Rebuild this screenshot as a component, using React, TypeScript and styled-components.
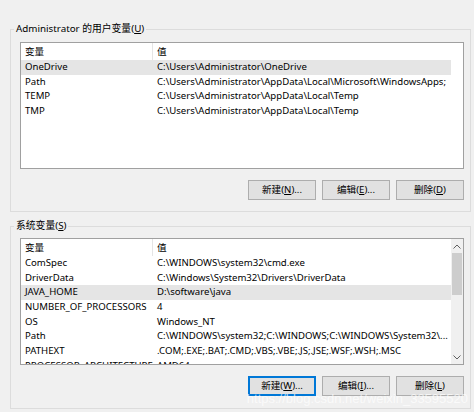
import styled, { createGlobalStyle } from "styled-components";

type EnvVar = { name: string; value: string };

const userVars: EnvVar[] = [
  { name: "OneDrive", value: "C:\\Users\\Administrator\\OneDrive" },
  {
    name: "Path",
    value: "C:\\Users\\Administrator\\AppData\\Local\\Microsoft\\WindowsApps;",
  },
  { name: "TEMP", value: "C:\\Users\\Administrator\\AppData\\Local\\Temp" },
  { name: "TMP", value: "C:\\Users\\Administrator\\AppData\\Local\\Temp" },
];

const systemVars: EnvVar[] = [
  { name: "ComSpec", value: "C:\\WINDOWS\\system32\\cmd.exe" },
  { name: "DriverData", value: "C:\\Windows\\System32\\Drivers\\DriverData" },
  { name: "JAVA_HOME", value: "D:\\software\\java" },
  { name: "NUMBER_OF_PROCESSORS", value: "4" },
  { name: "OS", value: "Windows_NT" },
  {
    name: "Path",
    value: "C:\\WINDOWS\\system32;C:\\WINDOWS;C:\\WINDOWS\\System32\\...",
  },
  { name: "PATHEXT", value: ".COM;.EXE;.BAT;.CMD;.VBS;.VBE;.JS;.JSE;.WSF;.WSH;.MSC" },
  { name: "PROCESSOR_ARCHITECTURE", value: "AMD64" },
];

const GlobalStyle = createGlobalStyle`
  body {
    margin: 0;
    background: #f0f0f0;
    font-family: "Noto Sans", "Noto Sans CJK SC", sans-serif;
    font-size: 9.6px;
    color: #000;
  }
`;

const Window = styled.div`
  position: relative;
  width: 474px;
  height: 412px;
  box-sizing: border-box;
  padding: 21px 3px 0 10px;
  display: flex;
  flex-direction: column;
  gap: 6px;
  overflow: hidden;
`;

const GroupBox = styled.fieldset`
  margin: 0;
  padding: 0;
  width: 461px;
  box-sizing: border-box;
  border: 1px solid #dcdcdc;
  min-width: 0;
`;

const Caption = styled.legend`
  margin-left: 3px;
  padding: 0 2px;
  line-height: 16px;
  font-size: 9.8px;
`;

const GroupBody = styled.div<{ $top: number; $bottom: number }>`
  padding: ${({ $top }) => $top}px 6px ${({ $bottom }) => $bottom}px 9px;
  display: flex;
  flex-direction: column;
  gap: 11px;
`;

const ListBox = styled.div`
  height: 127px;
  box-sizing: border-box;
  border: 1px solid #a0a0a0;
  background: #fff;
  display: flex;
  overflow: hidden;
`;

const ListArea = styled.div`
  width: 430px;
  flex: none;
  overflow: hidden;
`;

const Grid = styled.div`
  display: grid;
  grid-template-columns: 132px 1fr;
  align-items: center;
  white-space: nowrap;
`;

const HeaderRow = styled(Grid)`
  height: 17px;
`;

const HeaderCell = styled.div<{ $divider?: boolean }>`
  height: 17px;
  line-height: 17px;
  padding-left: 4px;
  border-right: ${({ $divider }) => ($divider ? "1px solid #e5e5e5" : "none")};
`;

const Row = styled(Grid)<{ $selected?: boolean }>`
  height: 14.7px;
  line-height: 14.7px;
  background: ${({ $selected }) => ($selected ? "#e5e5e5" : "transparent")};
`;

const Cell = styled.div`
  padding-left: 4px;
  overflow: hidden;
`;

const ScrollBar = styled.div`
  width: 12px;
  background: #f0f0f0;
  display: flex;
  flex-direction: column;
`;

const ScrollArrow = styled.div`
  height: 14px;
  display: flex;
  align-items: center;
  justify-content: center;
  color: #606060;
`;

const ScrollTrack = styled.div`
  flex: 1;
  padding: 0 1px;
`;

const ScrollThumb = styled.div`
  height: 42px;
  background: #cdcdcd;
`;

const ButtonRow = styled.div`
  display: flex;
  justify-content: flex-end;
  gap: 6px;
`;

const Button = styled.button<{ $focused?: boolean }>`
  width: 68px;
  height: 20px;
  padding: 0;
  font: inherit;
  color: #000;
  background: #e1e1e1;
  border: 1px solid ${({ $focused }) => ($focused ? "#0078d7" : "#adadad")};
  box-shadow: ${({ $focused }) => ($focused ? "inset 0 0 0 1px #0078d7" : "none")};
  line-height: 18px;
`;

const Key = styled.span`
  text-decoration: underline;
`;

const Watermark = styled.div`
  position: absolute;
  right: 6px;
  bottom: 6px;
  font-family: "Liberation Sans", sans-serif;
  font-size: 13px;
  color: rgba(255, 255, 255, 0.7);
  pointer-events: none;
`;

const Chevron = ({ up }: { up?: boolean }) => (
  <svg width="8" height="5" viewBox="0 0 8 5">
    <path
      d={up ? "M0.5 4.5 L4 1 L7.5 4.5" : "M0.5 0.5 L4 4 L7.5 0.5"}
      fill="none"
      stroke="currentColor"
      strokeWidth="1"
    />
  </svg>
);

const VarList = ({
  vars,
  selected,
  scroll,
}: {
  vars: EnvVar[];
  selected: string;
  scroll?: boolean;
}) => (
  <ListBox>
    <ListArea>
      <HeaderRow>
        <HeaderCell $divider>变量</HeaderCell>
        <HeaderCell>值</HeaderCell>
      </HeaderRow>
      {vars.map((v) => (
        <Row key={v.name + v.value} $selected={v.name === selected}>
          <Cell>{v.name}</Cell>
          <Cell>{v.value}</Cell>
        </Row>
      ))}
    </ListArea>
    {scroll && (
      <ScrollBar>
        <ScrollArrow>
          <Chevron up />
        </ScrollArrow>
        <ScrollTrack>
          <ScrollThumb />
        </ScrollTrack>
        <ScrollArrow>
          <Chevron />
        </ScrollArrow>
      </ScrollBar>
    )}
  </ListBox>
);

const App = () => (
  <>
    <GlobalStyle />
    <Window>
      <GroupBox>
        <Caption>
          Administrator 的用户变量(<Key>U</Key>)
        </Caption>
        <GroupBody $top={5} $bottom={11}>
          <VarList vars={userVars} selected="OneDrive" />
          <ButtonRow>
            <Button>
              新建(<Key>N</Key>)...
            </Button>
            <Button>
              编辑(<Key>E</Key>)...
            </Button>
            <Button>
              删除(<Key>D</Key>)
            </Button>
          </ButtonRow>
        </GroupBody>
      </GroupBox>
      <GroupBox>
        <Caption>
          系统变量(<Key>S</Key>)
        </Caption>
        <GroupBody $top={4} $bottom={12}>
          <VarList vars={systemVars} selected="JAVA_HOME" scroll />
          <ButtonRow>
            <Button $focused>
              新建(<Key>W</Key>)...
            </Button>
            <Button>
              编辑(<Key>I</Key>)...
            </Button>
            <Button>
              删除(<Key>L</Key>)
            </Button>
          </ButtonRow>
        </GroupBody>
      </GroupBox>
      <Watermark>https://blog.csdn.net/weixin_33595520</Watermark>
    </Window>
  </>
);

export default App;
